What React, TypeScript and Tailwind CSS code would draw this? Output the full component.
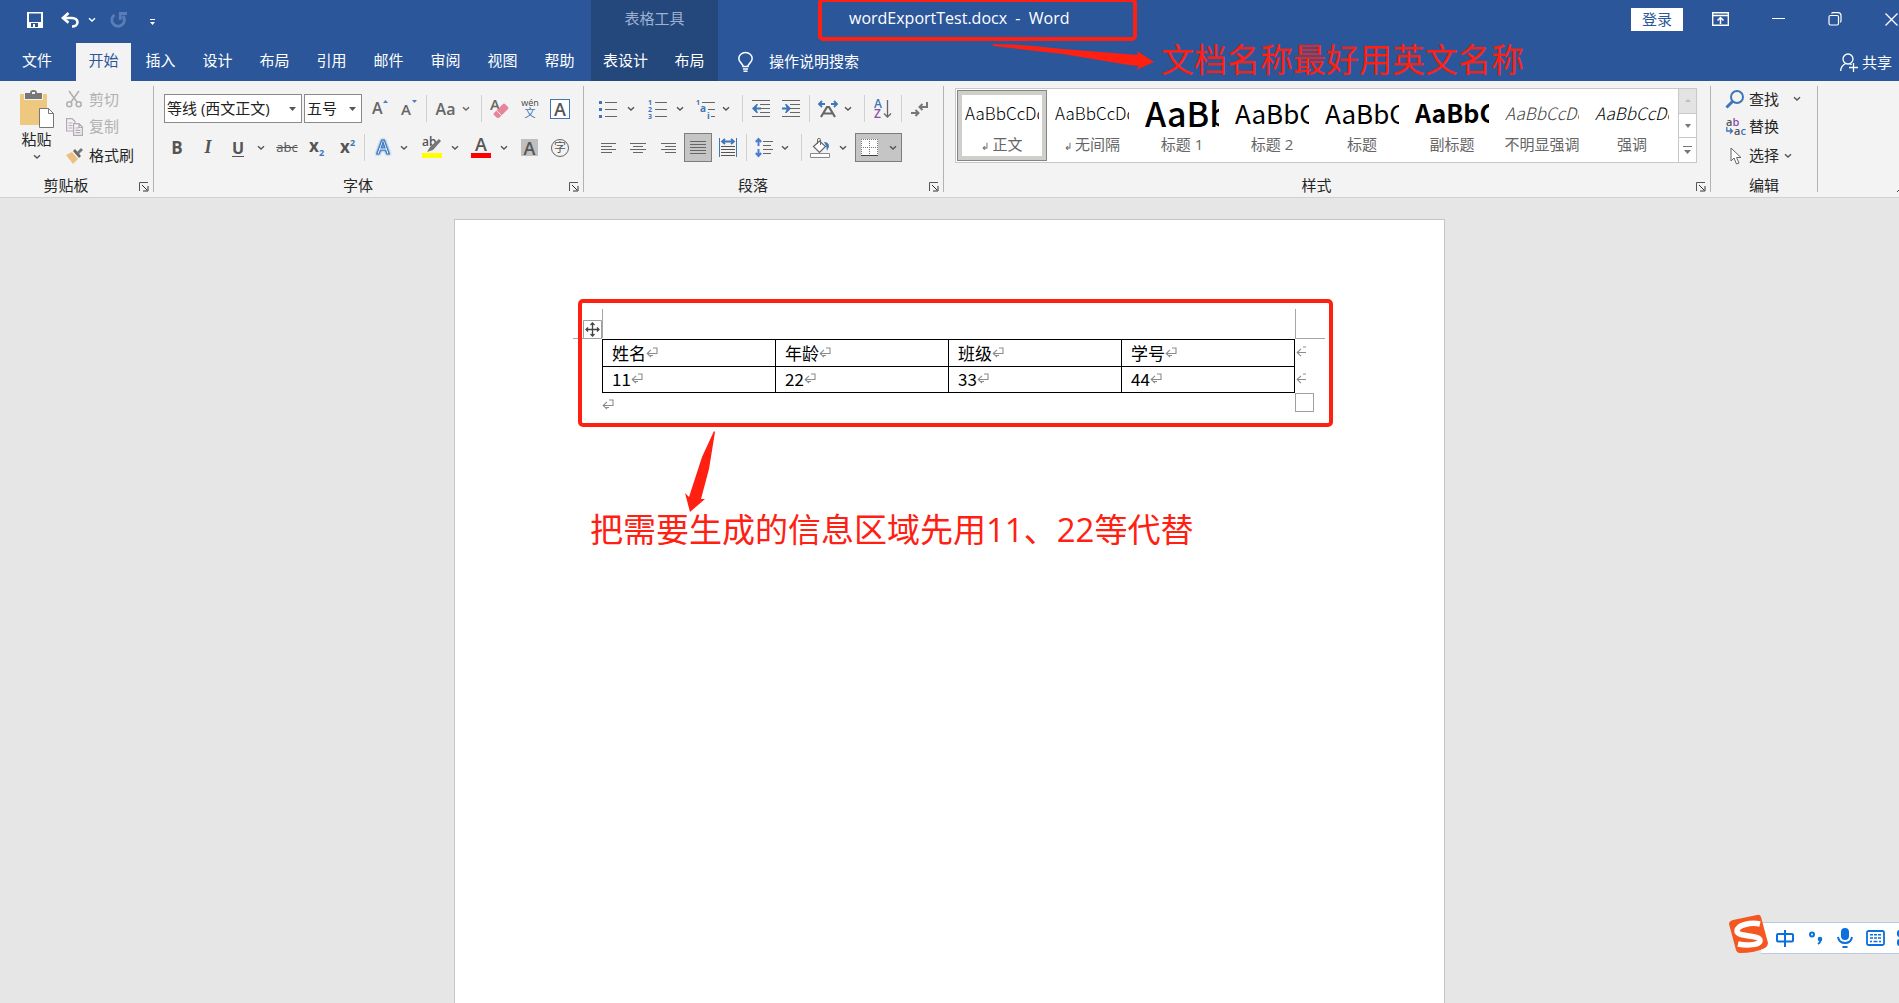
import React from "react";
import clsx from "clsx";

const FONT = "font-['Open_Sans','Noto_Sans_CJK_SC',sans-serif]";

const tabs = ["插入", "设计", "布局", "引用", "邮件", "审阅", "视图", "帮助"];

const styles = [
  { sample: "AaBbCcDd", name: "正文", mark: true, look: "text-[17px] font-light" },
  { sample: "AaBbCcDd", name: "无间隔", mark: true, look: "text-[17px] font-light" },
  { sample: "AaBb", name: "标题 1", look: "text-[34px] font-medium" },
  { sample: "AaBbC", name: "标题 2", look: "text-[26px]" },
  { sample: "AaBbC", name: "标题", look: "text-[26px]" },
  { sample: "AaBbC", name: "副标题", look: "text-[25px] font-bold" },
  { sample: "AaBbCcDd", name: "不明显强调", look: "text-[17px] font-light italic text-[#404040]" },
  { sample: "AaBbCcDd", name: "强调", look: "text-[17px] font-light italic" },
];

const rows = [
  ["姓名", "年龄", "班级", "学号"],
  ["11", "22", "33", "44"],
];

type ToolProps = {
  label: string;
  className?: string;
  children: React.ReactNode;
};

function Tool({ label, className, children }: ToolProps) {
  return (
    <button
      type="button"
      aria-label={label}
      className={clsx("flex h-[29px] shrink-0 items-center justify-center", className)}
    >
      {children}
    </button>
  );
}

function Chevron() {
  return (
    <svg width="8" height="6" viewBox="0 0 8 6" fill="none" stroke="currentColor" strokeWidth="1.4">
      <path d="M1 1.2l3 2.8 3-2.8" />
    </svg>
  );
}

function Drop({ label, className }: { label: string; className: string }) {
  return (
    <Tool label={label} className={clsx("text-[#555]", className)}>
      <Chevron />
    </Tool>
  );
}

function Sep({ className }: { className?: string }) {
  return <span className={clsx("h-[27px] w-px shrink-0 bg-[#d0d0d0]", className)} />;
}

function Launcher({ label }: { label: string }) {
  return (
    <button type="button" aria-label={label} className="absolute right-[4px] bottom-0">
      <svg width="10" height="10" viewBox="0 0 10 10" fill="none" stroke="#555">
        <path d="M.5 9V.5H9" />
        <path d="M3 3l5 5M9 4v5H4" stroke="#333" />
      </svg>
    </button>
  );
}

type GroupProps = {
  title: string;
  className: string;
  launcher?: boolean;
  children: React.ReactNode;
};

function Group({ title, className, launcher, children }: GroupProps) {
  return (
    <section
      aria-label={title}
      className={clsx("relative my-[5px] flex h-[106px] flex-col justify-between border-r border-[#b3b3b3]", className)}
    >
      {children}
      <h2 className={clsx("h-[15px] text-center text-[15px] leading-[17px]", launcher && "pr-[21px]")}>{title}</h2>
      {launcher && <Launcher label={title + "选项"} />}
    </section>
  );
}

function Combo({ label, value, className }: { label: string; value: string; className: string }) {
  return (
    <span className={clsx("relative flex h-[29px] shrink-0 border border-[#8a8a8a] bg-white", className)}>
      <select aria-label={label} className="w-full appearance-none pl-[2px] text-[15px] text-[#222]">
        <option>{value}</option>
      </select>
      <svg className="pointer-events-none absolute top-[12px] right-[5px]" width="7" height="4" viewBox="0 0 7 4" fill="#555">
        <path d="M0 0h7L3.500 4z" />
      </svg>
    </span>
  );
}

function Enter({ className }: { className?: string }) {
  return (
    <svg
      className={clsx("inline-block", className)}
      width="12"
      height="12"
      viewBox="0 0 12 12"
      fill="none"
      stroke="#8c8c8c"
      strokeWidth="1.1"
    >
      <path d="M7 1h4v5.500H1.500M5 2.800L1.200 6.500 5 10.200M4 8.500h3" />
    </svg>
  );
}

// Mark at the end of a table row, drawn without its upright
function RowEnd({ className }: { className?: string }) {
  return (
    <svg className={className} width="11" height="12" viewBox="0 0 11 12" fill="none" stroke="#8c8c8c" strokeWidth="1.1">
      <path d="M7 1h3M1.500 6.500H10M5 2.800L1.200 6.500 5 10.200" />
    </svg>
  );
}

// Horizontal text lines used by the alignment and indent icons
function Lines({ w, lines, h = 17 }: { w: number; h?: number; lines: number[][] }) {
  return (
    <svg width={w} height={h} viewBox={`0 0 ${w} ${h}`} stroke="#666" shapeRendering="crispEdges">
      {lines.map(([x1, x2, y]) => (
        <path key={y} d={`M${x1} ${y + 0.5}H${x2}`} />
      ))}
    </svg>
  );
}

function Header() {
  return (
    <header className="flex h-[81px] bg-[#2b579a] text-[15px] text-white">
      <div className="flex w-[591px] shrink-0 flex-col">
        <div className="flex h-[40px] items-center pl-[27px]">
          <button type="button" aria-label="保存">
            <svg width="16" height="16" viewBox="0 0 16 16">
              <path d="M0 0h16v16H0zM2 1.500v8.500h12V1.500zM4 11v4h2v-3h2v3h3v-4z" fill="#fff" fillRule="evenodd" />
            </svg>
          </button>
          <button type="button" aria-label="撤消" className="ml-[18px]">
            <svg width="18" height="16" viewBox="0 0 18 16" fill="none" stroke="#fff" strokeWidth="2.600">
              <path d="M1.500 6H11c3.500 0 5.500 2 5.500 4.200S14.500 14.500 11 14.500" />
              <path d="M7.500 1L2 6l5.500 4.800" />
            </svg>
          </button>
          <button type="button" aria-label="撤消选项" className="ml-[9px]">
            <Chevron />
          </button>
          <button type="button" aria-label="重做" className="ml-[14px]">
            <svg width="17" height="16" viewBox="0 0 17 16" fill="none" stroke="#5b7db3" strokeWidth="2.800">
              <path d="M4.500 2.800A6.300 6.300 0 1 0 13 4" />
              <path d="M10.300 8V1.500H17" />
            </svg>
          </button>
          <button type="button" aria-label="自定义快速访问工具栏" className="ml-[22px] pt-[3px]">
            <svg width="7" height="8" viewBox="0 0 7 8" fill="#fff">
              <path d="M1 1h5v1H1zM1 4h5L3.500 7z" />
            </svg>
          </button>
        </div>
        <nav className="mt-[3px] flex h-[38px] gap-[2px]">
          <button type="button" className="w-[74px] pb-[3px]">文件</button>
          <button type="button" className="w-[55px] bg-[#f3f3f3] pb-[3px] text-[#2b579a]">开始</button>
          {tabs.map((tab) => (
            <button type="button" key={tab} className="w-[55px] pb-[3px]">
              {tab}
            </button>
          ))}
        </nav>
      </div>

      <div className="flex w-[127px] shrink-0 flex-col bg-[#24477c]">
        <div className="flex h-[36px] items-center justify-center text-[#9db1d1]">表格工具</div>
        <nav className="mt-[7px] flex h-[38px] gap-[2px]">
          <button type="button" className="w-[69px] pb-[3px]">表设计</button>
          <button type="button" className="w-[55px] pb-[3px]">布局</button>
        </nav>
      </div>

      <div className="flex min-w-0 flex-1 flex-col">
        <div className="flex h-[38px] items-center justify-between">
          <div className="relative ml-[100px] flex h-[38px] w-[319px] items-center pl-[31px]">
            <h1 className="pb-[2px] text-[16px] whitespace-pre">wordExportTest.docx  -  Word</h1>
            <span className="absolute -top-[2px] left-0 h-[43px] w-full rounded-[5px] border-[4px] border-[#ff2012]" />
            <svg
              className="pointer-events-none absolute top-[44px] left-[175px]"
              width="162"
              height="27"
              viewBox="0 0 162 27"
              fill="#ff2012"
            >
              <path d="M0 0Q30 0 70 5L145 11 144 7 161 18 143 26 146 22 136 21 70 10 0 2Z" />
            </svg>
            <p className="absolute top-[40px] left-[343px] text-[33px] leading-[40px] whitespace-nowrap text-[#ff2012]">
              文档名称最好用英文名称
            </p>
          </div>
          <div className="flex items-center">
            <button type="button" className="h-[23px] w-[52px] bg-white leading-[21px] text-[#2b579a]">
              登录
            </button>
            <button type="button" aria-label="功能区显示选项" className="ml-[29px]">
              <svg width="17" height="14" viewBox="0 0 17 14" fill="none" stroke="#fff">
                <path d="M.7.7h15.600v12.600H.7zM1 3.500h15" strokeWidth="1.400" />
                <path d="M8.500 12V6M5.500 8.500l3-3 3 3" strokeWidth="1.500" />
              </svg>
            </button>
            <button type="button" aria-label="最小化" className="ml-[43px]">
              <svg width="13" height="2" viewBox="0 0 13 2">
                <path d="M0 0h13v1H0z" fill="#fff" />
              </svg>
            </button>
            <button type="button" aria-label="还原" className="ml-[43px]">
              <svg width="14" height="14" viewBox="0 0 14 14" fill="none" stroke="#fff" strokeWidth="1.200">
                <rect x="1" y="3.500" width="9.500" height="9.500" rx="1.500" />
                <path d="M3.500 1.500q.5-.8 1.500-.8h5q3 0 3 3v5q0 1-.8 1.500" />
              </svg>
            </button>
            <button type="button" aria-label="关闭" className="mr-[1px] ml-[43px]">
              <svg width="13" height="13" viewBox="0 0 13 13" fill="none" stroke="#fff" strokeWidth="1.300">
                <path d="M.5.5l12 12M12.500.5l-12 12" />
              </svg>
            </button>
          </div>
        </div>
        <div className="mt-[5px] flex h-[38px] items-center justify-between pr-[7px] pl-[20px]">
          <button type="button" className="flex items-center gap-[16px]">
            <svg width="15" height="20" viewBox="0 0 15 20" fill="none" stroke="#fff" strokeWidth="1.500">
              <path d="M5 14.500c0-3-4.200-4-4.200-8a6.700 6 0 0 1 13.400 0c0 4-4.200 5-4.200 8z" />
              <path d="M5 17h5M5.500 19.300h4" />
            </svg>
            <span className="pb-[2px]">操作说明搜索</span>
          </button>
          <button type="button" className="flex items-center gap-[4px]">
            <svg width="18" height="19" viewBox="0 0 18 19" fill="none" stroke="#fff" strokeWidth="1.300">
              <circle cx="8" cy="6" r="5" />
              <path d="M.7 18c0-4 2-6 5-7.500M9.500 10.500l2 1.200M13.500 10v9M9 14.500h9" />
            </svg>
            共享
          </button>
        </div>
      </div>
    </header>
  );
}

function Clipboard() {
  return (
    <Group title="剪贴板" className="w-[154px]" launcher>
      <div className="flex">
        <button type="button" className="flex w-[54px] flex-col items-center pt-[4px] pl-[19px] text-[15px]">
          <svg width="36" height="38" viewBox="0 0 36 38">
            <path d="M1 4h27v31H1z" fill="#edc87e" />
            <path d="M5 2h19v8H5z" fill="#f3f3f3" />
            <path d="M6 3h5q0-3 3.500-3T18 3h5v6H6zM13 4h3V2h-3z" fill="#777" fillRule="evenodd" />
            <path d="M20.500 18.500h9l5 5v14h-14z" fill="#fff" stroke="#777" />
            <path d="M29.500 18.500v5h5" fill="none" stroke="#777" />
          </svg>
          <span className="mt-[3px] leading-[17px]">粘贴</span>
          <span className="mt-[6px] text-[#555]">
            <Chevron />
          </span>
        </button>
        <div className="ml-[12px] flex flex-col text-[15px] whitespace-nowrap">
          <button type="button" disabled className="flex h-[26px] items-center gap-[7px] text-[#b1b1b1]">
            <svg width="16" height="18" viewBox="0 0 16 18" fill="none" stroke="#b1b1b1" strokeWidth="1.600">
              <path d="M3 1l8 11M13 1L5 12" />
              <circle cx="3.300" cy="14.300" r="2.500" />
              <circle cx="12.700" cy="14.300" r="2.500" />
            </svg>
            剪切
          </button>
          <button type="button" disabled className="flex h-[29px] items-center gap-[6px] text-[#b1b1b1]">
            <svg width="17" height="18" viewBox="0 0 17 18" fill="none" stroke="#b3a9b5" strokeWidth="1.200">
              <path d="M7 13H.6V.6H6L9 3.500V5M2.500 5h4M2.500 7.500h4M2.500 10h4" />
              <path d="M7.600 5.600H13l3.400 3.400v8.400H7.600zM13 6v3.500h3.500M9.500 10h3M9.500 12.300h5M9.500 14.600h5" fill="#f3f3f3" />
            </svg>
            复制
          </button>
          <button type="button" className="flex h-[29px] items-center gap-[6px]">
            <svg width="17" height="16" viewBox="0 0 17 16">
              <path d="M0 7l6-3 6 7-5 5z" fill="#edc080" />
              <path d="M7 3l2-2 6 7-2 2z" fill="#666" />
              <path d="M11 4l4-4 2 2-4 4z" fill="#777" />
            </svg>
            格式刷
          </button>
        </div>
      </div>
    </Group>
  );
}

function FontGroup() {
  return (
    <Group title="字体" className="w-[430px]" launcher>
      <div className="flex flex-col gap-[10px] pt-[8px] pl-[10px] text-[#555]">
        <div className="flex items-center">
          <Combo label="字体" value="等线 (西文正文)" className="w-[138px]" />
          <Combo label="字号" value="五号" className="ml-[2px] w-[58px]" />
          <Tool label="增大字号" className="ml-[4px] w-[29px]">
            <svg width="18" height="20" viewBox="0 0 18 20" fill="#666">
              <text x="0" y="15" fontSize="16" fontWeight="600">A</text>
              <path d="M11 4l2.500-3L16 4z" fill="#4a7ebb" />
            </svg>
          </Tool>
          <Tool label="减小字号" className="w-[29px]">
            <svg width="18" height="20" viewBox="0 0 18 20" fill="#666">
              <text x="0" y="16" fontSize="15" fontWeight="600">A</text>
              <path d="M11 1l2.500 3L16 1z" fill="#4a7ebb" />
            </svg>
          </Tool>
          <Sep className="ml-[2px]" />
          <Tool label="更改大小写" className="w-[52px] gap-[7px] text-[16px] font-semibold text-[#666]">
            Aa <Chevron />
          </Tool>
          <Sep className="ml-[2px]" />
          <Tool label="清除所有格式" className="w-[36px]">
            <svg width="20" height="22" viewBox="0 0 20 22" fill="#666">
              <text x="0" y="12" fontSize="15" fontWeight="600">A</text>
              <path d="M13 6q1-1 2 0l3 3q1 1 0 2l-8 8q-2 2-4 0l-2-2q-1-1 0-2z" fill="#e6859a" />
              <path d="M6.500 12.500l5 5" stroke="#f3f3f3" />
            </svg>
          </Tool>
          <Tool label="拼音指南" className="w-[24px]">
            <svg width="18" height="22" viewBox="0 0 18 22" textAnchor="middle">
              <text x="9" y="8" fontSize="9" fill="#444">wén</text>
              <text x="9" y="19" fontSize="11" fill="#3f76b8">文</text>
            </svg>
          </Tool>
          <Tool label="字符边框" className="w-[36px]">
            <span className="flex h-[20px] w-[20px] items-center justify-center border border-[#3f76b8] bg-white text-[18px] leading-none font-semibold">
              A
            </span>
          </Tool>
        </div>
        <div className="flex items-center">
          <Tool label="加粗" className="w-[26px] text-[17px] font-bold">B</Tool>
          <Tool label="倾斜" className="w-[36px] font-['Liberation_Serif',serif] text-[18px] font-bold italic">I</Tool>
          <Tool label="下划线" className="w-[24px] text-[16px] font-bold underline underline-offset-2">U</Tool>
          <Drop label="下划线选项" className="w-[22px]" />
          <Tool label="删除线" className="w-[30px] text-[13px] line-through">abc</Tool>
          <Tool label="下标" className="w-[30px]">
            <svg width="16" height="20" viewBox="0 0 16 20" fontWeight="700">
              <text x="0" y="14" fontSize="17" fill="#555">x</text>
              <text x="10" y="18" fontSize="9" fill="#3f76b8">2</text>
            </svg>
          </Tool>
          <Tool label="上标" className="w-[32px]">
            <svg width="16" height="20" viewBox="0 0 16 20" fontWeight="700">
              <text x="0" y="15" fontSize="17" fill="#555">x</text>
              <text x="10" y="8" fontSize="9" fill="#3f76b8">2</text>
            </svg>
          </Tool>
          <Sep className="mr-px" />
          <Tool label="文本效果" className="w-[34px]">
            <svg width="18" height="20" viewBox="0 0 18 20">
              <text
                x="9"
                y="16"
                fontSize="19"
                fontWeight="600"
                textAnchor="middle"
                fill="#fff"
                stroke="#3f7cc4"
                strokeWidth="1.200"
                className="drop-shadow-[0_0_1px_#3f7cc4]"
              >
                A
              </text>
            </svg>
          </Tool>
          <Drop label="文本效果选项" className="w-[8px]" />
          <Tool label="突出显示" className="ml-[8px] w-[32px]">
            <svg width="20" height="20" viewBox="0 0 20 20">
              <text x="0" y="8" fontSize="12" fontWeight="600" fill="#555">ab</text>
              <path d="M5 14l3-5L17 1l2 2-8 9z" fill="#777" />
              <path d="M0 15h20v5H0z" fill="#ff0" />
            </svg>
          </Tool>
          <Drop label="突出显示颜色" className="w-[14px]" />
          <Tool label="字体颜色" className="w-[38px]">
            <svg width="20" height="20" viewBox="0 0 20 20">
              <text x="10" y="13" fontSize="18" fontWeight="600" textAnchor="middle" fill="#555">A</text>
              <path d="M0 15h20v5H0z" fill="red" />
            </svg>
          </Tool>
          <Drop label="字体颜色选项" className="w-[8px]" />
          <Tool label="字符底纹" className="ml-[6px] w-[31px]">
            <span className="flex h-[17px] w-[17px] items-center justify-center bg-[#bfbfbf] text-[18px] leading-none font-semibold">
              A
            </span>
          </Tool>
          <Tool label="带圈字符" className="w-[30px]">
            <span className="flex h-[18px] w-[18px] items-center justify-center rounded-full border border-[#666] text-[12px] leading-none">
              字
            </span>
          </Tool>
        </div>
      </div>
    </Group>
  );
}

const indentLines = [[0, 18, 0], [8, 18, 4], [8, 18, 8], [8, 18, 12], [0, 18, 16]];

function ParagraphGroup() {
  return (
    <Group title="段落" className="w-[360px]" launcher>
      <div className="flex flex-col gap-[10px] pt-[8px] pl-[10px] text-[#555]">
        <div className="flex items-center">
          <Tool label="项目符号" className="w-[28px]">
            <svg width="18" height="18" viewBox="0 0 18 18" fill="#3f76b8">
              <path d="M0 1h3v3H0zM0 8h3v3H0zM0 15h3v3H0z" />
              <path d="M6 2h12v1H6zM6 9h12v1H6zM6 16h12v1H6z" fill="#666" />
            </svg>
          </Tool>
          <Drop label="项目符号库" className="w-[18px]" />
          <Tool label="编号" className="w-[34px]">
            <svg width="19" height="20" viewBox="0 0 19 20" fill="#3f76b8" fontSize="7" fontWeight="700">
              <text x="0" y="6">1</text>
              <text x="0" y="13">2</text>
              <text x="0" y="20">3</text>
              <path d="M7 3h12v1H7zM7 10h12v1H7zM7 17h12v1H7z" fill="#666" />
            </svg>
          </Tool>
          <Drop label="编号库" className="w-[12px]" />
          <Tool label="多级列表" className="ml-[4px] w-[32px]">
            <svg width="20" height="20" viewBox="0 0 20 20" fill="#3f76b8" fontSize="9" fontWeight="700">
              <text x="0" y="6" fontSize="7">1</text>
              <text x="4" y="13" fontSize="10">a</text>
              <text x="11" y="20">i</text>
              <path d="M6 3h13v1H6zM12 10h7v1h-7zM15 17h4v1h-4z" fill="#666" />
            </svg>
          </Tool>
          <Drop label="列表库" className="w-[8px]" />
          <Sep className="ml-[12px]" />
          <Tool label="减少缩进量" className="relative w-[36px]">
            <Lines w={18} lines={indentLines} />
            <svg className="absolute left-[9px]" width="9" height="9" viewBox="0 0 9 9" fill="#3f76b8">
              <path d="M0 4.500L4.500 0H6L4.500 3.500H9v2H4.500L6 9H4.500z" />
            </svg>
          </Tool>
          <Tool label="增加缩进量" className="relative w-[24px]">
            <Lines w={18} lines={indentLines} />
            <svg className="absolute left-[3px]" width="9" height="9" viewBox="0 0 9 9" fill="#3f76b8">
              <path d="M9 4.500L4.500 0H3l1.500 3.500H0v2h4.500L3 9h1.500z" />
            </svg>
          </Tool>
          <Sep className="ml-[6px]" />
          <Tool label="中文版式" className="ml-[4px] w-[28px]">
            <svg width="20" height="18" viewBox="0 0 20 18" fill="none" strokeWidth="2">
              <path d="M3 17L9 7h2l6 10M6 13.500h8" stroke="#666" strokeWidth="2.200" />
              <path d="M1 4h6M4 1L1 4l3 3M13 4h6M16 1l3 3-3 3" stroke="#3f76b8" strokeWidth="1.800" />
            </svg>
          </Tool>
          <Drop label="中文版式选项" className="w-[12px]" />
          <Sep className="ml-[10px]" />
          <Tool label="排序" className="w-[36px]">
            <svg width="18" height="20" viewBox="0 0 18 20" fontSize="12" fontWeight="600">
              <text x="0" y="9" fill="#3f76b8">A</text>
              <text x="0" y="19" fill="#8a50a8">Z</text>
              <path d="M13.500 1v17M10 14.500l3.500 3.500 3.500-3.500" fill="none" stroke="#666" strokeWidth="1.300" />
            </svg>
          </Tool>
          <Sep />
          <Tool label="显示编辑标记" className="w-[34px]">
            <svg width="17" height="16" viewBox="0 0 17 16" fill="none" stroke="#777" strokeWidth="2">
              <path d="M16 1v5H9M11.500 3L8.500 6l3 3M0 12h7M4.500 9l3 3-3 3" />
            </svg>
          </Tool>
        </div>
        <div className="flex items-center">
          <Tool label="左对齐" className="w-[28px]">
            <Lines w={15} h={10} lines={[[0, 15, 0], [0, 11, 3], [0, 15, 6], [0, 11, 9]]} />
          </Tool>
          <Tool label="居中" className="w-[32px]">
            <Lines w={16} h={10} lines={[[0, 16, 0], [3, 13, 3], [0, 16, 6], [3, 13, 9]]} />
          </Tool>
          <Tool label="右对齐" className="w-[28px]">
            <Lines w={15} h={10} lines={[[0, 15, 0], [4, 15, 3], [0, 15, 6], [4, 15, 9]]} />
          </Tool>
          <Tool label="两端对齐" className="ml-[2px] w-[28px] border border-[#7d7d7d] bg-[#c5c5c5]">
            <Lines w={16} h={13} lines={[[0, 16, 0], [0, 16, 3], [0, 16, 6], [0, 16, 9], [0, 16, 12]]} />
          </Tool>
          <Tool label="分散对齐" className="w-[32px]">
            <svg width="18" height="19" viewBox="0 0 18 19" fill="none">
              <path d="M.5 0v19M17.500 0v19" stroke="#3f76b8" />
              <path d="M3 3.500h12M6 .8L3 3.500l3 2.700M12 .8l3 2.700-3 2.700" stroke="#3f76b8" strokeWidth="1.800" />
              <path d="M2 8.500h14M2 11.500h14M2 14.500h14M2 17.500h14" stroke="#555" />
            </svg>
          </Tool>
          <Sep className="ml-[2px]" />
          <Tool label="行和段落间距" className="w-[33px]">
            <svg width="18" height="19" viewBox="0 0 18 19" fill="none">
              <path d="M3.500 1v7M3.500 11v7M.8 4l2.700-3 2.700 3M.8 15l2.700 3 2.700-3" stroke="#4a7ed0" strokeWidth="2" />
              <path d="M8 3.500h10M8 7.500h8M8 11.500h10M8 15.500h8" stroke="#666" />
            </svg>
          </Tool>
          <Drop label="行距选项" className="w-[10px]" />
          <Sep className="ml-[11px]" />
          <Tool label="底纹" className="w-[36px]">
            <svg width="20" height="20" viewBox="0 0 20 20" fill="none">
              <path d="M3.500 8.500L9.500 3l6 5.500-6 6z" fill="#fff" stroke="#666" strokeWidth="1.200" />
              <path d="M7.500 6V1.500q0-1 1.500-1t1.500 1V7" stroke="#666" />
              <path d="M14 4q5 0 5 4.500L17 13q0-5-3-9z" fill="#3f76b8" />
              <path d="M.5 15.500h19v4H.5z" fill="#fff" stroke="#888" />
            </svg>
          </Tool>
          <Drop label="底纹颜色" className="w-[10px]" />
          <Tool label="边框" className="ml-[7px] w-[47px] gap-[11px] border border-[#7d7d7d] bg-[#c5c5c5]">
            <svg width="17" height="17" viewBox="0 0 17 17" fill="none">
              <path d="M0 0h17v17H0z" fill="#fff" />
              <path d="M0 .5h17M.5 0v17M16.500 0v17M8.500 0v17M0 8.500h17" stroke="#777" strokeDasharray="1 1" />
              <path d="M0 16.500h17" stroke="#444" />
            </svg>
            <Chevron />
          </Tool>
        </div>
      </div>
    </Group>
  );
}

function StyleGroup() {
  return (
    <Group title="样式" className="min-w-0 flex-1" launcher>
      <div className="mt-[2px] mr-[13px] ml-[11px] flex h-[75px] border border-[#c8c8c8] bg-white">
        <div className="flex min-w-0 flex-1 p-px">
          {styles.map((style, index) => (
            <button
              type="button"
              key={style.name}
              className={clsx(
                "flex h-[71px] min-w-0 flex-1 flex-col items-center px-[3px] text-[#666]",
                index == 0 && "shadow-[inset_0_0_0_1px_#858585,inset_0_0_0_5px_#d0cecb]"
              )}
            >
              <span
                className={clsx(
                  "mt-[2px] flex h-[41px] w-[74px] items-center overflow-hidden font-['Noto_Sans_CJK_SC',sans-serif] leading-[41px] whitespace-nowrap",
                  style.look,
                  index != 6 && "text-black"
                )}
              >
                {style.sample}
              </span>
              <span className="text-[15px] leading-[22px] whitespace-nowrap">
                {style.mark && <span className="mr-[3px] text-[10px]">↲</span>}
                {style.name}
              </span>
            </button>
          ))}
        </div>
        <div className="flex w-[18px] shrink-0 flex-col border-l border-[#c8c8c8] text-[#777]">
          <button type="button" aria-label="上一行" className="flex flex-1 items-center justify-center bg-[#e3e3e3] text-[#bdbdbd]">
            <svg width="6" height="4" viewBox="0 0 6 4" fill="currentColor"><path d="M0 3h6L3 0z" /></svg>
          </button>
          <button type="button" aria-label="下一行" className="flex flex-1 items-center justify-center border-y border-[#c8c8c8]">
            <svg width="6" height="4" viewBox="0 0 6 4" fill="currentColor"><path d="M0 0h6L3 4z" /></svg>
          </button>
          <button type="button" aria-label="其他样式" className="flex flex-1 items-center justify-center">
            <svg width="9" height="8" viewBox="0 0 9 8" fill="currentColor"><path d="M0 0h9v1H0zM1 4h7L4.500 8z" /></svg>
          </button>
        </div>
      </div>
    </Group>
  );
}

function EditGroup() {
  return (
    <Group title="编辑" className="w-[107px]">
      <div className="flex flex-col pl-[15px] text-[15px]">
        <button type="button" className="flex h-[26px] items-center">
          <svg width="18" height="18" viewBox="0 0 18 18" fill="none" stroke="#3f76b8">
            <circle cx="11" cy="7" r="6" strokeWidth="2" />
            <path d="M7 11l-6.500 6.500" strokeWidth="3" />
          </svg>
          <span className="ml-[5px]">查找</span>
          <span className="ml-[14px] text-[#555]"><Chevron /></span>
        </button>
        <button type="button" className="flex h-[29px] items-center">
          <svg width="20" height="18" viewBox="0 0 20 18" fontSize="11" fontWeight="600">
            <text x="0" y="8" fill="#555">a<tspan fill="#8a50a8">b</tspan></text>
            <text x="8" y="17" fill="#555">a<tspan fill="#3f76b8">c</tspan></text>
            <path d="M.8 9v4H6M4 10.500L6.500 13 4 15.500" fill="none" stroke="#3f76b8" strokeWidth="1.300" />
          </svg>
          <span className="ml-[3px]">替换</span>
        </button>
        <button type="button" className="flex h-[29px] items-center">
          <svg className="ml-[4px]" width="12" height="18" viewBox="0 0 12 18" fill="#fff" stroke="#666">
            <path d="M1 1v13l3-3 2.500 6 2.500-1-2.500-5.500H11z" />
          </svg>
          <span className="ml-[7px]">选择</span>
          <span className="ml-[5px] text-[#555]"><Chevron /></span>
        </button>
      </div>
    </Group>
  );
}

function Page() {
  return (
    <main className="flex flex-1 justify-center bg-[#e6e6e6] pt-[21px]">
      <article className="w-full max-w-[991px] border border-b-0 border-[#c6c6c6] bg-white pt-[119px] pr-[149px] pl-[147px]">
        <div className="relative font-['Noto_Sans_CJK_SC',sans-serif]">
          <span className="absolute -top-[30px] left-0 h-[29px] w-px bg-[#a6a6a6]" />
          <span className="absolute -top-[1px] -left-[29px] h-px w-[29px] bg-[#a6a6a6]" />
          <span className="absolute -top-[30px] right-[-1px] h-[29px] w-px bg-[#a6a6a6]" />
          <span className="absolute -top-[1px] right-[-30px] h-px w-[30px] bg-[#a6a6a6]" />
          <svg className="absolute -top-[19px] -left-[19px]" width="19" height="19" viewBox="0 0 19 19" fill="none">
            <path d="M.5.5h18v18H.5z" fill="#fff" stroke="#a0a0a0" />
            <path d="M9.500 3v13M3 9.500h13M7.500 5l2-2 2 2M7.500 14l2 2 2-2M5 7.500l-2 2 2 2M14 7.500l2 2-2 2" stroke="#444" strokeWidth="1.300" />
          </svg>
          <table className="w-full table-fixed border-collapse border border-black text-[17px] text-black">
            <tbody>
              {rows.map((row, index) => (
                <tr key={index} className={index == 0 ? "h-[27px]" : "h-[26px]"}>
                  {row.map((cell) => (
                    <td key={cell} className="border border-black p-0 pb-[2px] pl-[9px] leading-[23px]">
                      {cell}
                      <Enter className="-mt-[4px]" />
                    </td>
                  ))}
                </tr>
              ))}
            </tbody>
          </table>
          <RowEnd className="absolute top-[7px] -right-[12px]" />
          <RowEnd className="absolute top-[34px] -right-[12px]" />
          <span className="absolute -right-[19px] -bottom-[19px] h-[19px] w-[19px] border border-[#a0a0a0]" />
          <Enter className="absolute -bottom-[18px] left-0" />

          <span className="absolute -top-[40px] -left-[24px] h-[128px] w-[755px] rounded-[5px] border-[4px] border-[#ff2012]" />
          <svg className="absolute top-[91px] left-[82px]" width="32" height="83" viewBox="0 0 32 83" fill="#ff2012">
            <path d="M30 1L31 2 25 39 17 69 21 69 6 82 1 63 5 67 18 27Z" />
          </svg>
          <p className={clsx("absolute top-[169px] -left-[12px] text-[33px] leading-[44px] whitespace-nowrap text-[#ff2012]", FONT)}>
            把需要生成的信息区域先用11、22等代替
          </p>
        </div>
      </article>
    </main>
  );
}

function InputBar() {
  return (
    <div className="absolute right-0 bottom-[49px] flex items-end text-[#0b6fdc]">
      <svg className="relative z-10 -mr-[8px]" width="40" height="40" viewBox="0 0 40 40">
        <path d="M4 6L28 1q3-1 4 2l7 26q0 3-3 5-10 5-25 5-3 0-4-3L0 10q0-3 4-4z" fill="#f4571f" />
        <path
          d="M31 10C22 8 8 11 8 17s22 4 23 9-13 6-22 4"
          fill="none"
          stroke="#fff"
          strokeWidth="5.500"
        />
      </svg>
      <div className="flex h-[32px] w-[138px] items-center overflow-hidden border-y border-[#b7cbe2] bg-white pl-[15px]">
        <button type="button" aria-label="中文" className="shrink-0">
          <svg width="18" height="17" viewBox="0 0 18 17" fill="none" stroke="currentColor" strokeWidth="2">
            <rect x="1" y="4" width="16" height="7.500" rx="1" />
            <path d="M9 0v17" />
          </svg>
        </button>
        <button type="button" aria-label="标点" className="ml-[15px] shrink-0">
          <svg width="14" height="14" viewBox="0 0 14 14" fill="none" stroke="currentColor" strokeWidth="2">
            <circle cx="3" cy="3.500" r="2" />
            <path d="M11.500 7.500v1q0 3-2.500 4.500" />
            <circle cx="11" cy="8" r="1.300" />
          </svg>
        </button>
        <button type="button" aria-label="语音" className="ml-[14px] shrink-0">
          <svg width="16" height="20" viewBox="0 0 16 20" fill="none" stroke="currentColor" strokeWidth="2">
            <rect x="5" y="1" width="6" height="10" rx="3" fill="currentColor" />
            <path d="M1 9q1 6 7 6t7-6M5.500 19h5" />
          </svg>
        </button>
        <button type="button" aria-label="软键盘" className="ml-[13px] shrink-0">
          <svg width="19" height="16" viewBox="0 0 19 16" fill="none" stroke="currentColor" strokeWidth="1.800">
            <rect x="1" y="1" width="17" height="14" rx="1.500" />
            <path d="M4 4.800h3M8 4.800h3M12 4.800h3M4 8h3M8 8h3M12 8h3M4 11.500h2M7.500 11.500h4M13 11.500h2" strokeWidth="1.600" />
          </svg>
        </button>
        <button type="button" aria-label="工具箱" className="ml-[12px] shrink-0">
          <svg width="16" height="16" viewBox="0 0 16 16" fill="currentColor">
            <rect width="7" height="7" rx="2.500" />
            <rect y="9" width="7" height="7" rx="2.500" />
            <rect x="9" width="7" height="7" rx="2.500" />
            <rect x="9" y="9" width="7" height="7" rx="2.500" />
          </svg>
        </button>
      </div>
    </div>
  );
}

export default function App() {
  return (
    <div
      className={clsx(
        "relative flex min-h-screen flex-col overflow-hidden text-[#262626] [&_button_svg]:overflow-visible",
        FONT
      )}
    >
      <Header />
      <div className="flex h-[117px] border-b border-[#d2d2d2] bg-[#f3f3f3]">
        <Clipboard />
        <FontGroup />
        <ParagraphGroup />
        <StyleGroup />
        <EditGroup />
        <button type="button" aria-label="折叠功能区" className="flex w-[81px] shrink-0 items-end justify-end pb-[5px]">
          <svg width="2" height="3" viewBox="0 0 2 3" fill="none" stroke="#444">
            <path d="M0 3l2-2" />
          </svg>
        </button>
      </div>
      <Page />
      <InputBar />
    </div>
  );
}
